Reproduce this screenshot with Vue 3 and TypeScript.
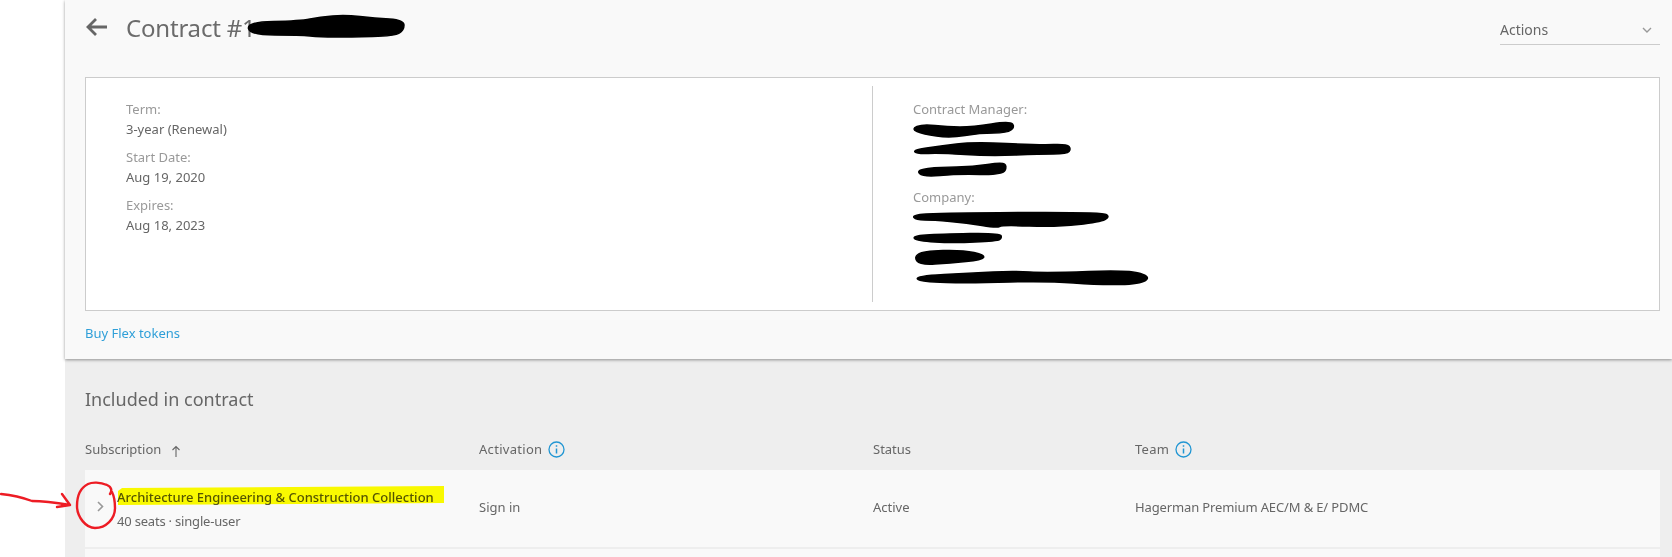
<script setup lang="ts">
interface Field {
  label: string
  value: string
}

const terms: Field[] = [
  { label: 'Term:', value: '3-year (Renewal)' },
  { label: 'Start Date:', value: 'Aug 19, 2020' },
  { label: 'Expires:', value: 'Aug 18, 2023' },
]

// marker strokes drawn on top of the screenshot
const marks: number[][][] = [
  [[247, 22], [300, 21], [320, 17], [345, 15], [375, 18], [404, 20], [404, 30], [395, 36], [350, 37], [320, 37], [300, 35], [250, 35]],
  [[911, 129], [923, 124], [947, 127], [973, 127], [1010, 121], [1015, 127], [1007, 133], [980, 133], [950, 138], [923, 134]],
  [[913, 150], [940, 146], [973, 142], [1040, 145], [1067, 144], [1071, 149], [1067, 154], [1040, 154], [990, 156], [940, 153], [917, 154]],
  [[916, 170], [940, 167], [973, 167], [1002, 162], [1007, 166], [1003, 175], [957, 174], [923, 177]],
  [[912, 215], [940, 213], [1103, 212], [1110, 217], [1100, 222], [1057, 227], [1002, 225], [997, 228], [967, 223], [933, 220], [916, 220]],
  [[912, 236], [940, 234], [1000, 233], [1002, 238], [997, 241], [953, 243], [917, 241]],
  [[914, 257], [923, 251], [963, 250], [985, 255], [982, 260], [950, 263], [920, 265]],
  [[915, 276], [973, 273], [1013, 271], [1047, 273], [1130, 270], [1151, 277], [1140, 284], [1100, 285], [1047, 281], [973, 283], [920, 282]],
]

// round the corners of a mark by curving through edge midpoints
function smooth(pts: number[][]): string {
  const mid = (a: number[], b: number[]) => `${(a[0] + b[0]) / 2} ${(a[1] + b[1]) / 2}`
  let d = `M${mid(pts[pts.length - 1], pts[0])}`
  pts.forEach((p, i) => {
    d += ` Q${p[0]} ${p[1]} ${mid(p, pts[(i + 1) % pts.length])}`
  })
  return d + 'Z'
}

const redactions = marks.map(smooth)
</script>

<template>
  <div class="page">
    <div class="gutter"></div>
    <main class="content">
      <section class="top">
        <header class="title-row">
          <div class="title-left">
            <svg class="back" width="22" height="20" viewBox="0 0 22 20">
              <path d="M22 10H3M11 2l-8 8 8 8" fill="none" stroke="#666" stroke-width="2.8" />
            </svg>
            <h1>Contract #1</h1>
          </div>
          <div class="actions">
            <span>Actions</span>
            <svg width="10" height="7" viewBox="0 0 10 7">
              <path d="M1 1l4 4 4-4" fill="none" stroke="#999" stroke-width="1.4" />
            </svg>
          </div>
        </header>

        <div class="card">
          <div class="card-col terms">
            <div v-for="t in terms" :key="t.label" class="field">
              <div class="label">{{ t.label }}</div>
              <div class="value">{{ t.value }}</div>
            </div>
          </div>
          <div class="card-col parties">
            <div class="label">Contract Manager:</div>
            <div class="label company">Company:</div>
          </div>
        </div>

        <a class="flex-link">Buy Flex tokens</a>
      </section>

      <section class="bottom">
        <h2>Included in contract</h2>
        <div class="thead">
          <div class="col-sub">
            Subscription
            <svg width="10" height="12" viewBox="0 0 10 12">
              <path d="M5 12V1.5M1.5 5L5 1.5 8.5 5" fill="none" stroke="#666" stroke-width="1.1" />
            </svg>
          </div>
          <div class="col-act head-info">
            Activation
            <svg class="info" width="17" height="17" viewBox="0 0 17 17">
              <circle cx="8.5" cy="8.5" r="7.5" fill="none" stroke="#2196d3" stroke-width="1.3" />
              <path d="M8.5 7.5v5M8.5 4.2v1.6" stroke="#2196d3" stroke-width="1.5" />
            </svg>
          </div>
          <div class="col-status">Status</div>
          <div class="col-team head-info">
            Team
            <svg class="info" width="17" height="17" viewBox="0 0 17 17">
              <circle cx="8.5" cy="8.5" r="7.5" fill="none" stroke="#2196d3" stroke-width="1.3" />
              <path d="M8.5 7.5v5M8.5 4.2v1.6" stroke="#2196d3" stroke-width="1.5" />
            </svg>
          </div>
        </div>
        <div class="row">
          <div class="col-sub product">
            <svg class="chev" width="7" height="11" viewBox="0 0 7 11">
              <path d="M1 1l4.5 4.5L1 10" fill="none" stroke="#999" stroke-width="1.6" />
            </svg>
            <div class="product-text">
              <div class="product-name">Architecture Engineering &amp; Construction Collection</div>
              <div class="product-sub">40 seats · single-user</div>
            </div>
          </div>
          <div class="col-act">Sign in</div>
          <div class="col-status">Active</div>
          <div class="col-team team-name">Hagerman Premium AEC/M &amp; E/ PDMC</div>
        </div>
        <div class="row next"></div>
      </section>
    </main>

    <!-- hand annotations over the screenshot -->
    <svg class="markup" width="1672" height="557" viewBox="0 0 1672 557">
      <polygon class="highlight" points="122,488 444,486 444,503 300,504 118,505 118,491" />
      <path v-for="(d, i) in redactions" :key="i" class="redact" :d="d" />
      <path
        class="pen"
        d="M107 485 C112 487 112 491 110 494 M107 485 C100 482 92 482 88 484 C80 488 77 497 77 506 C77 517 86 528 95 528 C106 528 115 519 115 508 C115 500 114 496 112 492"
      />
      <path class="pen" d="M1 494 C12 495 24 498 32 501 C44 501 58 503 70 505 M62 494 L70 505 L57 507" />
    </svg>
  </div>
</template>

<style scoped>
.page {
  position: relative;
  display: flex;
  width: 1672px;
  height: 557px;
  overflow: hidden;
  background: #fff;
  font-family: "Noto Sans", "Open Sans", sans-serif;
  font-size: 13px;
  color: #666;
}

.gutter {
  width: 65px;
  flex: none;
}

.content {
  flex: 1;
  display: flex;
  flex-direction: column;
  min-height: 0;
}

.top {
  flex: none;
  height: 359px;
  box-sizing: border-box;
  padding: 0 12px 0 20px;
  background: #f9f9f9;
  box-shadow: 0 1px 3px rgba(0, 0, 0, 0.4);
  position: relative;
}

.title-row {
  height: 77px;
  display: flex;
  justify-content: space-between;
  align-items: flex-start;
}

.title-left {
  display: flex;
  align-items: center;
  gap: 19px;
  height: 54px;
}

h1 {
  margin: 0;
  font-size: 24px;
  font-weight: 400;
  letter-spacing: -0.2px;
  color: #6b6b6b;
}

.actions {
  width: 160px;
  height: 45px;
  box-sizing: border-box;
  padding: 0 8px 0 0;
  display: flex;
  align-items: flex-end;
  justify-content: space-between;
  border-bottom: 1px solid #ccc;
  line-height: 28px;
  font-size: 14px;
}

.actions svg {
  margin-bottom: 10px;
}

.card {
  height: 234px;
  box-sizing: border-box;
  display: flex;
  background: #fff;
  border: 1px solid #ccc;
  padding: 8px 0;
}

.card-col {
  padding-top: 13px;
}

.terms {
  width: 787px;
  box-sizing: border-box;
  padding-left: 40px;
  border-right: 1px solid #ccc;
}

.parties {
  padding-left: 40px;
}

.field {
  height: 48px;
}

.label {
  color: #999;
  line-height: 20px;
}

.value {
  line-height: 20px;
}

.company {
  margin-top: 68px;
}

.flex-link {
  display: block;
  margin-top: 12px;
  color: #2f9fd8;
  line-height: 20px;
}

.bottom {
  flex: 1;
  padding: 0 12px 0 20px;
  background: #eee;
}

h2 {
  margin: 27px 0 0;
  font-size: 18px;
  line-height: 26px;
  font-weight: 400;
  color: #666;
}

.thead {
  display: flex;
  align-items: center;
  height: 58px;
  padding-top: 16px;
  box-sizing: border-box;
}

.thead svg {
  vertical-align: middle;
  margin-left: 6px;
}

.head-info {
  display: flex;
  align-items: center;
  letter-spacing: 0.3px;
}

.col-sub {
  width: 394px;
  flex: none;
}

.col-act {
  width: 394px;
  flex: none;
}

.col-status {
  width: 262px;
  flex: none;
}

.col-team {
  flex: 1;
}

.team-name {
  letter-spacing: -0.13px;
}

.row {
  display: flex;
  flex: none;
  align-items: center;
  height: 77px;
  box-sizing: border-box;
  padding-bottom: 4px;
  background: #f9f9f9;
}

.row.next {
  margin-top: 2px;
}

.product {
  display: flex;
  align-items: center;
  gap: 13px;
  padding-left: 12px;
  box-sizing: border-box;
}

.product-text {
  margin-top: 4px;
}

.product-name {
  font-weight: 500;
  line-height: 24px;
  color: #555;
}

.product-sub {
  line-height: 24px;
  letter-spacing: -0.2px;
}

.markup {
  position: absolute;
  left: 0;
  top: 0;
  pointer-events: none;
}

.highlight {
  fill: #ffff00;
  mix-blend-mode: multiply;
}

.redact {
  fill: #000;
  stroke: #000;
  stroke-width: 1.5;
  stroke-linejoin: round;
}

.pen {
  fill: none;
  stroke: #ed1c24;
  stroke-width: 2.4;
  stroke-linecap: round;
  stroke-linejoin: round;
}
</style>
